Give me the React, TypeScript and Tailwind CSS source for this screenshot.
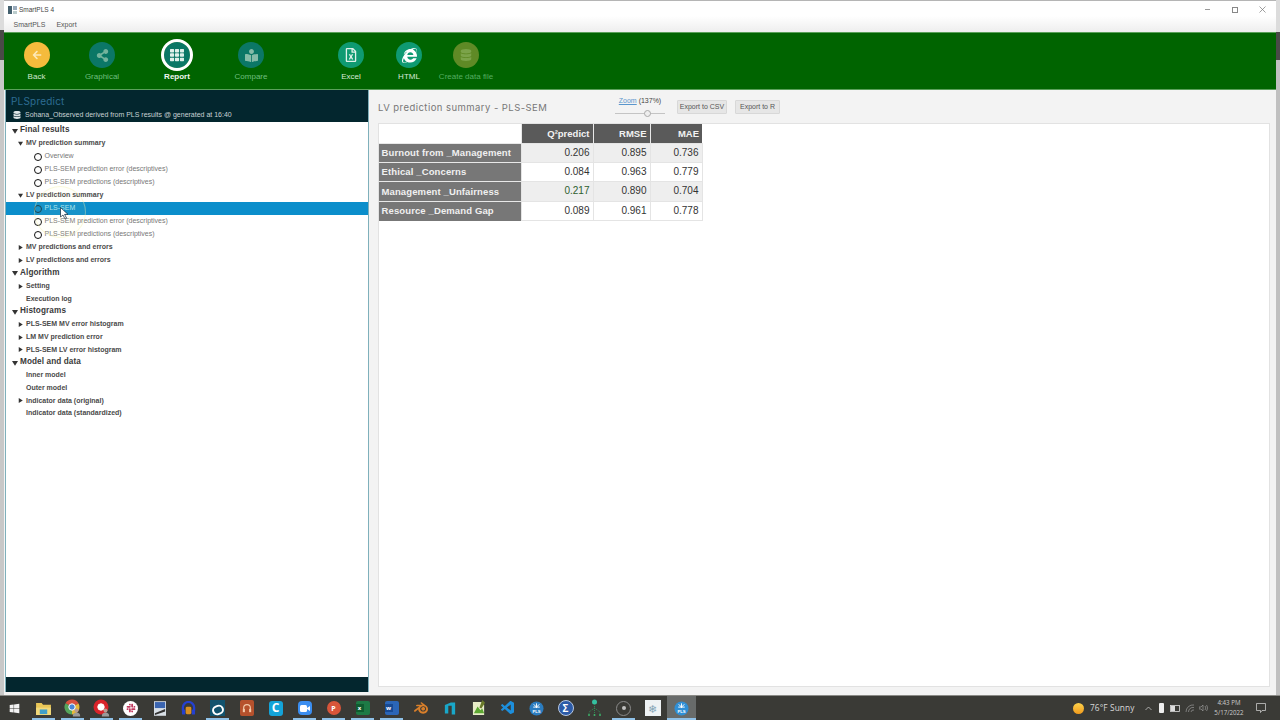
import React from "react";
import { FaArrowLeft, FaShareAlt, FaTh, FaBookReader, FaRegFileExcel, FaInternetExplorer, FaDatabase, FaWindows, FaSlack } from "react-icons/fa";
import { SiBlender } from "react-icons/si";
import { VscVscode } from "react-icons/vsc";

const FONT = "font-['Liberation_Sans',Arial,sans-serif]";

function ToolButton({ w, bg, icon, label, labelClass, ring }: { w: string; bg: string; icon: React.ReactNode; label: string; labelClass: string; ring?: boolean }) {
  return (
    <div className={`${w} flex flex-col items-center pt-[9px]`}>
      <div className={`flex h-[26px] w-[26px] items-center justify-center rounded-full ${bg} ${ring ? "outline-[3px] outline-white" : ""}`}>{icon}</div>
      <div className={`mt-[4px] whitespace-nowrap text-[8px] leading-[10px] ${labelClass}`}>{label}</div>
    </div>
  );
}

type Row = { t: string; k: "top" | "sub" | "leaf"; open?: boolean; arrow?: boolean; sel?: boolean };
const rows: Row[] = [
  { t: "Final results", k: "top", open: true },
  { t: "MV prediction summary", k: "sub", arrow: true, open: true },
  { t: "Overview", k: "leaf" },
  { t: "PLS-SEM prediction error (descriptives)", k: "leaf" },
  { t: "PLS-SEM predictions (descriptives)", k: "leaf" },
  { t: "LV prediction summary", k: "sub", arrow: true, open: true },
  { t: "PLS-SEM", k: "leaf", sel: true },
  { t: "PLS-SEM prediction error (descriptives)", k: "leaf" },
  { t: "PLS-SEM predictions (descriptives)", k: "leaf" },
  { t: "MV predictions and errors", k: "sub", arrow: true },
  { t: "LV predictions and errors", k: "sub", arrow: true },
  { t: "Algorithm", k: "top", open: true },
  { t: "Setting", k: "sub", arrow: true },
  { t: "Execution log", k: "sub" },
  { t: "Histograms", k: "top", open: true },
  { t: "PLS-SEM MV error histogram", k: "sub", arrow: true },
  { t: "LM MV prediction error", k: "sub", arrow: true },
  { t: "PLS-SEM LV error histogram", k: "sub", arrow: true },
  { t: "Model and data", k: "top", open: true },
  { t: "Inner model", k: "sub" },
  { t: "Outer model", k: "sub" },
  { t: "Indicator data (original)", k: "sub", arrow: true },
  { t: "Indicator data (standardized)", k: "sub" },
];

function Tri({ open, small }: { open?: boolean; small?: boolean }) {
  const s = small ? 5 : 6;
  return (
    <svg width={s} height={s} viewBox="0 0 10 10" className="shrink-0">
      {open ? <path d="M0 1.5H10L5 9.5Z" fill="#333" /> : <path d="M1.5 0V10L9.5 5Z" fill="#333" />}
    </svg>
  );
}

function TreeRow({ r, late }: { r: Row; late: boolean }) {
  const h = late ? "h-[12.75px]" : "h-[13px]";
  if (r.k === "top") {
    return (
      <div className={`flex ${h} items-center pl-[6px]`}>
        <Tri open={r.open} />
        <span className="ml-[2px] text-[8.2px] font-bold tracking-[0.1px] text-[#3a3a3a]">{r.t}</span>
      </div>
    );
  }
  if (r.k === "sub") {
    return (
      <div className={`flex ${h} items-center pl-[12px]`}>
        <span className="flex w-[5px] shrink-0 items-center">{r.arrow ? <Tri open={r.open} small /> : null}</span>
        <span className="ml-[3px] whitespace-nowrap text-[7px] font-bold text-[#4a4a4a]">{r.t}</span>
      </div>
    );
  }
  return (
    <div className={`flex ${h} items-center pl-[28px] ${r.sel ? "bg-[#0b8ecb]" : ""}`}>
      <span className={`h-[8px] w-[8px] shrink-0 rounded-full border-[1.5px] ${r.sel ? "border-[#123a4a]" : "border-[#111]"}`} />
      <span className={`ml-[2.5px] whitespace-nowrap text-[7px] ${r.sel ? "text-[#a9e2ee]" : "text-[#777]"}`}>{r.t}</span>
    </div>
  );
}

const tableRows = [
  ["Burnout from _Management", "0.206", "0.895", "0.736"],
  ["Ethical _Concerns", "0.084", "0.963", "0.779"],
  ["Management _Unfairness", "0.217", "0.890", "0.704"],
  ["Resource _Demand Gap", "0.089", "0.961", "0.778"],
];

function Pls({ bright }: { bright?: boolean }) {
  return (
    <svg width="15" height="15" viewBox="0 0 16 16">
      <circle cx="8" cy="8" r="7.5" fill={bright ? "#2f8fd6" : "#2a7cc0"} />
      <path d="M8 2.5v5M5 3.5l3 3 3-3M4.5 6.5h7" stroke="#fff" strokeWidth="1" fill="none" />
      <text x="8" y="13" textAnchor="middle" fontSize="4.5" fontWeight="700" fill="#fff" fontFamily="Liberation Sans">PLS</text>
    </svg>
  );
}

function ChromeLike({ red }: { red?: boolean }) {
  return (
    <svg width="18" height="18" viewBox="0 0 18 18">
      {red ? (
        <circle cx="8" cy="8" r="7.5" fill="#d8232a" />
      ) : (
        <>
          <path d="M8 8 1.5 4.2A7.5 7.5 0 0 1 14.6 4.5Z" fill="#d9503f" />
          <path d="M8 8 14.6 4.5A7.5 7.5 0 0 1 8 15.5Z" fill="#e6b93a" />
          <path d="M8 8 8 15.5A7.5 7.5 0 0 1 1.5 4.2Z" fill="#55a55b" />
        </>
      )}
      <circle cx="8" cy="8" r="3.2" fill={red ? "#fff" : "#4a86d8"} stroke="#fff" strokeWidth="1" />
      <circle cx="12.5" cy="11.5" r="2" fill="#b89a90" />
      <path d="M8.8 17.5c0-3 1.5-4 3.7-4s3.7 1 3.7 4Z" fill="#9a9a9a" />
    </svg>
  );
}

const taskIcons: { n: React.ReactNode; on?: boolean; active?: boolean }[] = [
  { n: <FaWindows size={11} color="#f2f2f2" /> },
  {
    n: (
      <svg width="15" height="13" viewBox="0 0 16 14">
        <path d="M0 1h6l1.5 2H16v11H0Z" fill="#e9c657" />
        <rect y="6" width="16" height="8" fill="#f1d87a" />
        <rect x="4" y="8" width="8" height="5" fill="#3f9fc9" />
      </svg>
    ),
    on: true,
  },
  { n: <ChromeLike />, on: true },
  { n: <ChromeLike red />, on: true },
  {
    n: (
      <div className="flex h-[15px] w-[15px] items-center justify-center rounded-full bg-white">
        <FaSlack size={10} color="#c0395e" />
      </div>
    ),
    on: true,
  },
  {
    n: (
      <svg width="12" height="15" viewBox="0 0 14 17">
        <rect width="14" height="17" fill="#d8dfe6" />
        <rect x="1" y="1" width="12" height="7" fill="#3a64b0" />
        <path d="M1 14 13 9v3L1 16Z" fill="#333" />
      </svg>
    ),
  },
  {
    n: (
      <svg width="15" height="15" viewBox="0 0 16 16">
        <path d="M2 10V7a6 6 0 0 1 12 0v3" stroke="#2440d0" strokeWidth="2.4" fill="none" />
        <rect x="1" y="9" width="3.5" height="5.5" rx="1" fill="#2440d0" />
        <rect x="11.5" y="9" width="3.5" height="5.5" rx="1" fill="#2440d0" />
        <rect x="5" y="6" width="6" height="8" rx="1.5" fill="#d98f20" />
      </svg>
    ),
  },
  {
    n: (
      <div className="flex h-[16px] w-[15px] items-end justify-center bg-[#12536e] pb-[1px]">
        <span className="h-[10px] w-[12px] -rotate-[20deg] rounded-full border-[2px] border-white" />
      </div>
    ),
    on: true,
  },
  {
    n: (
      <div className="flex h-[16px] w-[14px] items-center justify-center rounded-[2px] bg-[#b6512c]">
        <svg width="10" height="10" viewBox="0 0 12 12">
          <path d="M2 8V6a4 4 0 0 1 8 0v2" stroke="#f3c8a8" strokeWidth="1.4" fill="none" />
          <rect x="1" y="7" width="2.5" height="4" fill="#f3c8a8" />
          <rect x="8.5" y="7" width="2.5" height="4" fill="#f3c8a8" />
        </svg>
      </div>
    ),
  },
  {
    n: (
      <div className="flex h-[15px] w-[14px] items-center justify-center rounded-[3px] bg-[#14a3d8]">
        <span className="text-[12px] font-bold leading-none text-white">C</span>
      </div>
    ),
  },
  {
    n: (
      <div className="flex h-[14px] w-[14px] items-center justify-center rounded-[4px] bg-[#3b8ef0]">
        <svg width="10" height="7" viewBox="0 0 10 7">
          <rect width="7" height="7" rx="1.5" fill="#fff" />
          <path d="M7 3 10 1v5L7 4Z" fill="#fff" />
        </svg>
      </div>
    ),
    on: true,
  },
  {
    n: (
      <div className="flex h-[14px] w-[14px] items-center justify-center rounded-full bg-[#d8553a]">
        <span className="text-[7px] font-bold leading-none text-white">P</span>
      </div>
    ),
    on: true,
  },
  {
    n: (
      <div className="flex h-[14px] w-[14px] items-center justify-start rounded-[2px] bg-[#1d7a45]">
        <span className="flex h-[8px] w-[8px] items-center justify-center bg-[#0f5c30] text-[6px] font-bold leading-none text-white">x</span>
      </div>
    ),
    on: true,
  },
  {
    n: (
      <div className="flex h-[14px] w-[14px] items-center justify-start rounded-[2px] bg-[#2b66b8]">
        <span className="flex h-[8px] w-[8px] items-center justify-center bg-[#174a94] text-[6px] font-bold leading-none text-white">w</span>
      </div>
    ),
    on: true,
  },
  { n: <SiBlender size={14} color="#d97f2a" /> },
  {
    n: (
      <svg width="12" height="14" viewBox="0 0 14 15">
        <path d="M1 4 8 1h5v14H9V5H5v9H1Z" fill="#19a7c9" />
      </svg>
    ),
  },
  {
    n: (
      <svg width="14" height="16" viewBox="0 0 15 17">
        <path d="M1 2h9l3 3v11H1Z" fill="#e8edc8" />
        <path d="M2 14 6 7l3 4 2-2 2 5Z" fill="#5da832" />
        <path d="M11 0l3 3-4 6-2-1Z" fill="#6a7a2a" />
      </svg>
    ),
  },
  { n: <VscVscode size={16} color="#1d8fdc" /> },
  { n: <Pls /> },
  {
    n: (
      <div className="flex h-[16px] w-[16px] items-center justify-center rounded-full border border-[#b8c8e0] bg-[#2c5ba8]">
        <span className="text-[10px] font-bold leading-none text-white">Σ</span>
      </div>
    ),
  },
  {
    n: (
      <svg width="17" height="18" viewBox="0 0 17 18">
        <circle cx="8.5" cy="3" r="2.5" fill="#35c0a0" />
        <path d="M8.5 5v11M8.5 9 3 13v3M8.5 9 14 13v3" stroke="#2e9a5a" strokeWidth=".8" strokeDasharray="1 1" fill="none" />
        <circle cx="3" cy="16" r="1" fill="#3db06a" />
        <circle cx="8.5" cy="16" r="1" fill="#3db06a" />
        <circle cx="14" cy="16" r="1" fill="#3db06a" />
      </svg>
    ),
  },
  {
    n: (
      <div className="flex h-[15px] w-[15px] items-center justify-center rounded-full border border-[#8a8a8a]">
        <span className="h-[4px] w-[4px] rounded-full bg-[#c0c0c0]" />
      </div>
    ),
    on: true,
  },
  {
    n: (
      <div className="flex h-[16px] w-[16px] items-center justify-center bg-[#eef2f4] text-[11px] leading-none text-[#7fa3b5]">❄</div>
    ),
  },
  { n: <Pls bright />, on: true, active: true },
];

export default function App() {
  return (
    <div className={`flex h-[720px] w-[1280px] flex-col overflow-hidden bg-[#c9c9c9] ${FONT}`}>
      <div className="flex h-[695px]">
        <div className="flex w-[4px] flex-col bg-[#c8c8c8]">
          <div className="h-[30px] bg-[#dcdcdc]" />
          <div className="h-[30px] bg-[#4a4a48]" />
        </div>
        <div className="flex w-[1272px] flex-col">
          <div className="flex h-[16px] items-center justify-between border-t border-[#b5b5b5] bg-white pt-[2px]">
            <div className="flex items-center pl-[4px]">
              <svg width="9" height="8" viewBox="0 0 9 8">
                <rect width="4" height="8" fill="#44606e" />
                <rect x="5" width="4" height="4" fill="#9ab" />
                <rect x="5" y="5" width="4" height="3" fill="#bcc" />
              </svg>
              <span className="ml-[2px] text-[6.5px] text-[#444]">SmartPLS 4</span>
            </div>
            <div className="flex items-center pr-[10px]">
              <span className="h-px w-[5px] bg-[#999]" />
              <span className="ml-[22px] h-[6px] w-[6px] border border-[#888]" />
              <svg width="7" height="7" viewBox="0 0 7 7" className="ml-[21px]">
                <path d="M.5.5l6 6M6.5.5l-6 6" stroke="#777" strokeWidth=".7" />
              </svg>
            </div>
          </div>
          <div className="flex h-[16px] items-center gap-[11px] bg-gradient-to-b from-white to-[#eeeeee] pl-[9.5px] pt-[2px] text-[7px] text-[#555]">
            <span>SmartPLS</span>
            <span>Export</span>
          </div>
          <div className="flex h-[58px] border-y border-[#5aa05a] bg-[#006400]">
            <ToolButton w="w-[65px]" bg="bg-[#f5bb3c]" icon={<FaArrowLeft size={10} color="#fde9b8" />} label="Back" labelClass="text-[#cfe6cf]" />
            <ToolButton w="w-[66px]" bg="bg-[#0b7766]" icon={<FaShareAlt size={13} color="#74b39c" />} label="Graphical" labelClass="text-[#6fbf7f]" />
            <ToolButton w="w-[84px]" bg="bg-[#0b7766]" icon={<FaTh size={14} color="#dff0ea" />} label="Report" labelClass="font-bold text-[#f0f6f0]" ring />
            <ToolButton w="w-[64px]" bg="bg-[#0b7766]" icon={<FaBookReader size={13} color="#85bca8" />} label="Compare" labelClass="text-[#6fbf7f]" />
            <div className="w-[38px]" />
            <ToolButton w="w-[60px]" bg="bg-[#0f9a72]" icon={<FaRegFileExcel size={14} color="#e0f2ea" />} label="Excel" labelClass="text-[#d8ead8]" />
            <ToolButton w="w-[56px]" bg="bg-[#0f9a72]" icon={<FaInternetExplorer size={15} color="#ffffff" />} label="HTML" labelClass="text-[#d8ead8]" />
            <ToolButton w="w-[58px]" bg="bg-[#5f8a26]" icon={<FaDatabase size={12} color="#7ba34a" />} label="Create data file" labelClass="text-[#55ad60]" />
          </div>
          <div className="flex min-h-0 flex-1 bg-[#f3f3f3]">
            <div className="ml-px flex h-[602px] w-[364px] flex-col border-x border-[#7fb0bb]">
              <div className="h-[32px] shrink-0 bg-[#03262e] pl-[5px] pt-[5px]">
                <div className="font-['Inter',sans-serif] text-[10px] leading-[12px] tracking-[0.2px] text-[#2d6c92]">PLSpredict</div>
                <div className="mt-[2.5px] flex items-center">
                  <FaDatabase size={8} color="#e0e6e8" className="ml-[1.5px]" />
                  <span className="ml-[4.5px] whitespace-nowrap text-[7px] leading-[10px] text-[#c8d2d4]">Sohana_Observed derived from PLS results @ generated at 16:40</span>
                </div>
              </div>
              <div className="relative min-h-0 flex-1 bg-white pt-[2px]">
                {rows.map((r, i) => (
                  <TreeRow key={i} r={r} late={i >= 11} />
                ))}
                <div className="absolute left-[28px] top-[64px] h-[52px] w-[52px] rounded-full border border-[#f3f0b0]/40 bg-[#fff8a0]/5" />
                <svg width="9" height="13" viewBox="0 0 9 13" className="absolute left-[54px] top-[85px]">
                  <path d="M.5.5V10l2.5-2 2 4 1.6-.8-2-3.8H8Z" fill="#fff" stroke="#123" strokeWidth=".7" />
                </svg>
              </div>
              <div className="h-[15px] shrink-0 bg-[#03262e]" />
            </div>
            <div className="flex min-w-0 flex-1 flex-col pl-[9px] pr-[6px]">
              <div className="flex h-[33px] shrink-0 items-start">
                <div className="w-[231px] whitespace-nowrap pt-[12px] font-['Inter',sans-serif] text-[9.5px] leading-[12px] tracking-[0.45px] text-[#777]">LV prediction summary - PLS-SEM</div>
                <div className="flex w-[62px] flex-col items-center pt-[7px]">
                  <div className="whitespace-nowrap text-[7px] leading-[8px] text-[#444]">
                    <span className="text-[#5a96cc] underline">Zoom</span> (137%)
                  </div>
                  <div className="relative mt-[5px] h-[6px] w-[50px]">
                    <div className="absolute left-0 right-0 top-[2.5px] h-px bg-[#c4c4c4]" />
                    <div className="absolute left-[29px] top-0 h-[7px] w-[7px] rounded-full border border-[#aaa] bg-[#eee]" />
                  </div>
                </div>
                <div className="ml-[6px] mt-[10px] flex gap-[8px] text-[7px] text-[#555]">
                  <div className="flex h-[14px] w-[50px] items-center justify-center rounded-[1px] border border-[#d8d8d8] bg-[#e6e6e6]">Export to CSV</div>
                  <div className="flex h-[14px] w-[45px] items-center justify-center rounded-[1px] border border-[#d8d8d8] bg-[#e6e6e6]">Export to R</div>
                </div>
              </div>
              <div className="h-[564px] w-[892px] shrink-0 border border-[#e2e2e2] bg-white">
                <table className="table-fixed border-collapse text-[10px]">
                  <colgroup>
                    <col className="w-[142px]" />
                    <col className="w-[72px]" />
                    <col className="w-[57px]" />
                    <col className="w-[52px]" />
                  </colgroup>
                  <thead>
                    <tr className="h-[19px]">
                      <th className="bg-white p-0" />
                      {["Q²predict", "RMSE", "MAE"].map((h) => (
                        <th key={h} className="border-l border-[#e8e8e8] bg-[#5a5a5a] p-0 pr-[3px] text-right text-[9.5px] font-bold leading-none text-[#f2f2f2]">{h}</th>
                      ))}
                    </tr>
                  </thead>
                  <tbody>
                    {tableRows.map((r, i) => (
                      <tr key={r[0]} className="h-[19.4px]">
                        <td className="whitespace-nowrap border-t border-[#e8e8e8] bg-[#777777] p-0 pl-[2.5px] text-[9.5px] font-bold leading-none tracking-[0.12px] text-[#f0f0f0]">{r[0]}</td>
                        {r.slice(1).map((v, j) => (
                          <td key={j} className={`border border-[#e4e4e4] p-0 pr-[3px] text-right leading-none ${v === "0.217" ? "text-[#2f5f2f]" : "text-[#333]"} ${i % 2 === 0 ? "bg-[#eeeeee]" : "bg-white"}`}>{v}</td>
                        ))}
                      </tr>
                    ))}
                  </tbody>
                </table>
              </div>
            </div>
          </div>
        </div>
        <div className="flex w-[4px] flex-col bg-[#c0c0c0]">
          <div className="h-[32px] bg-[#dcdcdc]" />
          <div className="h-[28px] bg-[#4a4a48]" />
        </div>
      </div>
      <div className="flex h-[25px] items-center border-t border-[#8a8a86] bg-[#3a3a36] font-['Open_Sans',sans-serif]">
        {taskIcons.map((ic, i) => (
          <div key={i} className={`relative flex h-full w-[29px] shrink-0 items-center justify-center ${ic.active ? "bg-[#686b6a]" : ""}`}>
            {ic.n}
            {ic.on ? <span className={`absolute bottom-0 h-[2px] bg-[#8fc1e8] ${ic.active ? "inset-x-0" : "inset-x-[3px]"}`} /> : null}
          </div>
        ))}
        <div className="flex flex-1 items-center pl-[377px] text-[#d8d8d8]">
          <span className="h-[11px] w-[11px] shrink-0 rounded-full bg-gradient-to-b from-[#fdd24a] to-[#f09a1a]" />
          <span className="ml-[6px] w-[45px] whitespace-nowrap text-[8.3px] tracking-[0.1px]">76°F Sunny</span>
          <svg width="7" height="5" viewBox="0 0 7 5" className="ml-[9.5px]">
            <path d="M.5 4 3.5 1l3 3" stroke="#c8c8c8" strokeWidth=".8" fill="none" />
          </svg>
          <span className="ml-[7px] h-[10px] w-[5px] rounded-[1px] bg-[#eeeeee]" />
          <svg width="10" height="7" viewBox="0 0 10 7" className="ml-[6.5px]">
            <rect x=".5" y=".5" width="9" height="6" fill="none" stroke="#ddd" strokeWidth=".8" />
            <rect x="1" y="1" width="4" height="5" fill="#ddd" />
          </svg>
          <svg width="10" height="9" viewBox="0 0 10 9" className="ml-[5px]">
            <path d="M1 8A7 7 0 0 1 9 1M3.5 8A4.5 4.5 0 0 1 9 3.5M6 8A2.5 2.5 0 0 1 9 6" stroke="#999" strokeWidth=".7" fill="none" />
          </svg>
          <svg width="9" height="8" viewBox="0 0 9 8" className="ml-[3.5px]">
            <path d="M0 3h2l2-2v6L2 5H0ZM6 2a3 3 0 0 1 0 4M7.5 1a4.5 4.5 0 0 1 0 6" stroke="#aaa" strokeWidth=".6" fill="none" />
          </svg>
          <div className="ml-[6.5px] w-[30px] text-center text-[6.2px] leading-[10px] text-[#cccccc]">
            <div>4:43 PM</div>
            <div>5/17/2022</div>
          </div>
          <svg width="10" height="10" viewBox="0 0 10 10" className="ml-[12px]">
            <path d="M.5.5h9v7H6L4.5 9.5V7.5H.5Z" stroke="#ddd" strokeWidth=".7" fill="none" />
          </svg>
        </div>
      </div>
    </div>
  );
}
